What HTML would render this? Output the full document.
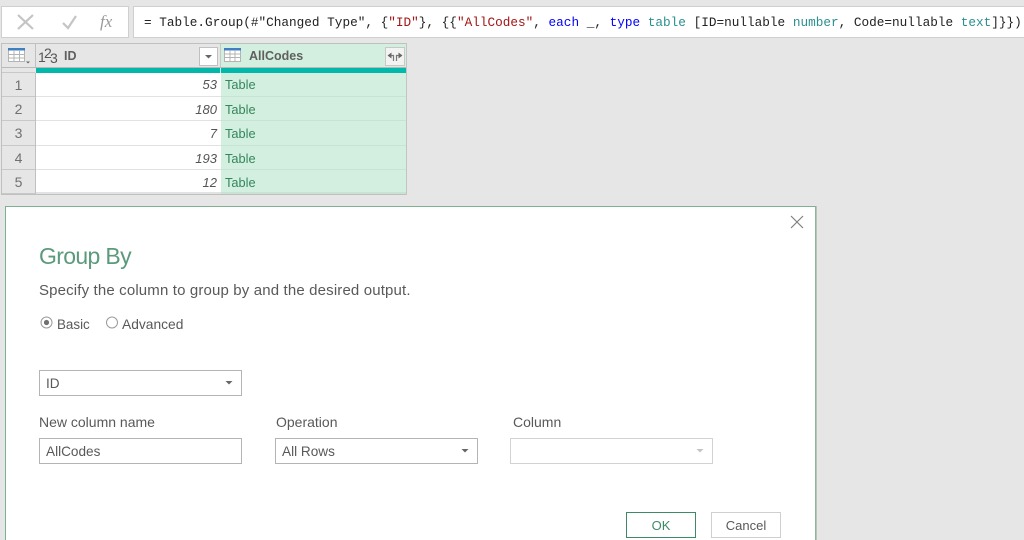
<!DOCTYPE html>
<html>
<head>
<meta charset="utf-8">
<style>
html,body{margin:0;padding:0;width:1024px;height:540px;overflow:hidden;background:#e6e6e6;}
body{position:relative;font-family:"Liberation Sans",sans-serif;color:#555;}
div,span,svg{position:absolute;box-sizing:border-box;white-space:nowrap;}
span.c{position:static;}
.rh{left:2px;width:33px;background:#e6e6e6;text-align:center;font-size:14px;color:#707070;border-bottom:1px solid #c8c8c8;}
.num{left:36px;width:185px;background:#fff;text-align:right;padding-right:4px;font-size:13px;font-style:italic;color:#555;border-bottom:2px solid #e2e2e2;}
.tb{left:221px;width:185px;background:#d3efe0;padding-left:4px;font-size:12.8px;color:#35865c;border-bottom:2px solid #c8e2d3;}
.lbl{font-size:14px;color:#595959;line-height:18px;}
.inp{height:26px;border:1px solid #b4b4b4;background:#fff;font-size:13.6px;line-height:25px;padding-left:6px;color:#595959;}
</style>
</head>
<body>
<!-- formula bar -->
<div style="left:1px;top:6px;width:128px;height:32px;background:#fff;border:1px solid #cfcfcf;"></div>
<svg style="left:0;top:0" width="130" height="40" viewBox="0 0 130 40">
<path d="M18 15L33 29M33 15L18 29" stroke="#c4c4c4" stroke-width="2.2" fill="none"/>
<path d="M63 23L68 28L76 16" stroke="#c4c4c4" stroke-width="2.2" fill="none"/>
<text x="100" y="27" font-family="Liberation Serif" font-style="italic" font-size="17" fill="#999">fx</text>
</svg>
<div style="left:133px;top:6px;width:891px;height:32px;background:#fff;border:1px solid #cfcfcf;border-right:0;font-family:'Liberation Mono',monospace;font-size:12.73px;line-height:31px;padding-left:10px;color:#222;">= Table.Group(#"Changed Type", {<span class="c" style="color:#a31515">"ID"</span>}, {{<span class="c" style="color:#a31515">"AllCodes"</span>, <span class="c" style="color:#0000ff">each</span> _, <span class="c" style="color:#0000ff">type</span> <span class="c" style="color:#2b8f8f">table</span> [ID=nullable <span class="c" style="color:#2b8f8f">number</span>, Code=nullable <span class="c" style="color:#2b8f8f">text</span>]}})</div>

<!-- table -->
<div style="left:1px;top:43px;width:406px;height:152px;background:#e6e6e6;border:1px solid #c0c0c0;border-right:2px solid #c4c4c4;"></div>
<div style="left:2px;top:44px;width:34px;height:24px;background:#e6e6e6;border-right:1px solid #c0c0c0;"></div>
<svg style="left:0;top:40px" width="36" height="30" viewBox="0 0 36 30">
<rect x="8.5" y="8.5" width="16" height="13" fill="#fff" stroke="#b4b4b4"/>
<rect x="8" y="8" width="17" height="2.5" fill="#3f7fc1"/>
<path d="M8.5 14.5H24.5M8.5 18H24.5M14 10V21M19.5 10V21" stroke="#b4b4b4" fill="none"/>
<path d="M26 21.5H30L28 23.5Z" fill="#666"/>
</svg>
<div style="left:36px;top:44px;width:185px;height:24px;background:#e6e6e6;border-right:1px solid #c8c8c8;"></div>
<div style="left:38px;top:50px;font-size:14px;line-height:14px;color:#555;">1</div>
<div style="left:44px;top:46px;font-size:14px;line-height:14px;color:#555;">2</div>
<div style="left:50px;top:51px;font-size:14px;line-height:14px;color:#555;">3</div>
<div style="left:64px;top:47px;font-size:12.5px;font-weight:bold;line-height:18px;color:#606060;">ID</div>
<div style="left:199px;top:47px;width:19px;height:19px;background:#fff;border:1px solid #c0c0c0;"></div>
<svg style="left:199px;top:47px" width="19" height="19"><path d="M6 8H13L9.5 11.5Z" fill="#666"/></svg>
<div style="left:221px;top:44px;width:185px;height:24px;background:#d3efe0;"></div>
<svg style="left:224px;top:47px" width="18" height="16" viewBox="0 0 18 16">
<rect x=".5" y="1.5" width="16" height="13" fill="#fff" stroke="#b4b4b4"/>
<rect x="0" y="1" width="17" height="2.5" fill="#3f7fc1"/>
<path d="M.5 7H16.5M.5 10.5H16.5M6 3V14M11 3V14" stroke="#b4b4b4" fill="none"/>
</svg>
<div style="left:249px;top:47px;font-size:12.5px;font-weight:bold;line-height:18px;color:#606060;">AllCodes</div>
<div style="left:385px;top:47px;width:20px;height:19px;background:#f3f3f3;border:1px solid #c8c8c8;"></div>
<svg style="left:385px;top:47px" width="20" height="19" viewBox="0 0 20 19">
<path d="M2.5 8.5L6.5 5.5V11.5ZM17.5 8.5L13.5 5.5V11.5Z" fill="#666"/>
<path d="M6 8.5H8.5V14M14 8.5H11.5V14" stroke="#777" stroke-width="1.2" fill="none"/>
</svg>
<div style="left:2px;top:67px;width:404px;height:1px;background:#b9b9b9;"></div>
<div style="left:2px;top:72px;width:33px;height:1px;background:#c8c8c8;"></div>
<div style="left:36px;top:68px;width:370px;height:5px;background:#01b8aa;"></div>
<div style="left:220px;top:68px;width:1px;height:5px;background:#d3efe0;"></div>

<div class="rh" style="top:73px;height:24px;line-height:24px;">1</div>
<div class="num" style="top:73px;height:25px;line-height:24px;">53</div>
<div class="tb" style="top:73px;height:25px;line-height:24px;">Table</div>
<div class="rh" style="top:97px;height:24px;line-height:25px;">2</div>
<div class="num" style="top:97px;height:25px;line-height:25px;">180</div>
<div class="tb" style="top:97px;height:25px;line-height:25px;">Table</div>
<div class="rh" style="top:121px;height:25px;line-height:25px;">3</div>
<div class="num" style="top:121px;height:26px;line-height:25px;">7</div>
<div class="tb" style="top:121px;height:26px;line-height:25px;">Table</div>
<div class="rh" style="top:146px;height:24px;line-height:25px;">4</div>
<div class="num" style="top:146px;height:25px;line-height:25px;">193</div>
<div class="tb" style="top:146px;height:25px;line-height:25px;">Table</div>
<div class="rh" style="top:170px;height:24px;line-height:25px;">5</div>
<div class="num" style="top:170px;height:24px;line-height:25px;">12</div>
<div class="tb" style="top:170px;height:24px;line-height:25px;">Table</div>
<div style="left:35px;top:73px;width:1px;height:121px;background:#c0c0c0;"></div>

<!-- dialog -->
<div style="left:5px;top:206px;width:811px;height:340px;background:#fff;border:1px solid #7fb08f;border-right:1px solid #8fb39c;box-shadow:1px 0 0 #b5c7bb;"></div>
<svg style="left:788px;top:213px" width="18" height="18"><path d="M3 3L15 15M15 3L3 15" stroke="#808080" stroke-width="1.2" fill="none"/></svg>
<div style="left:39px;top:241px;font-size:23px;line-height:30px;color:#5c9a7c;letter-spacing:-.65px;">Group By</div>
<div class="lbl" style="left:39px;top:282px;font-size:15px;letter-spacing:.15px;">Specify the column to group by and the desired output.</div>
<svg style="left:38px;top:314px" width="90" height="18">
<circle cx="8.5" cy="8.5" r="5.5" fill="#fff" stroke="#9a9a9a"/><circle cx="8.5" cy="8.5" r="2.6" fill="#707070"/>
<circle cx="74" cy="8.5" r="5.5" fill="#fff" stroke="#9a9a9a"/>
</svg>
<div class="lbl" style="left:57px;top:316px;font-size:13.4px;">Basic</div>
<div class="lbl" style="left:122px;top:316px;font-size:13.8px;">Advanced</div>

<div class="inp" style="left:39px;top:370px;width:203px;">ID</div>
<svg style="left:225px;top:379px" width="10" height="8"><path d="M0.5 2H7.5L4 5.5Z" fill="#666"/></svg>

<div class="lbl" style="left:39px;top:413px;">New column name</div>
<div class="inp" style="left:39px;top:438px;width:203px;">AllCodes</div>
<div class="lbl" style="left:276px;top:413px;">Operation</div>
<div class="inp" style="left:275px;top:438px;width:203px;">All Rows</div>
<svg style="left:461px;top:447px" width="10" height="8"><path d="M0.5 2H7.5L4 5.5Z" fill="#666"/></svg>
<div class="lbl" style="left:513px;top:413px;">Column</div>
<div class="inp" style="left:510px;top:438px;width:203px;border-color:#d2d2d2;"></div>
<svg style="left:696px;top:447px" width="10" height="8"><path d="M0.5 2H7.5L4 5.5Z" fill="#c4c4c4"/></svg>

<div style="left:626px;top:512px;width:70px;height:26px;border:1px solid #3f8a66;background:#fff;text-align:center;font-size:13px;line-height:25px;color:#3f8a66;">OK</div>
<div style="left:711px;top:512px;width:70px;height:26px;border:1px solid #cfcfcf;background:#fff;text-align:center;font-size:13px;line-height:25px;color:#595959;">Cancel</div>
</body>
</html>
